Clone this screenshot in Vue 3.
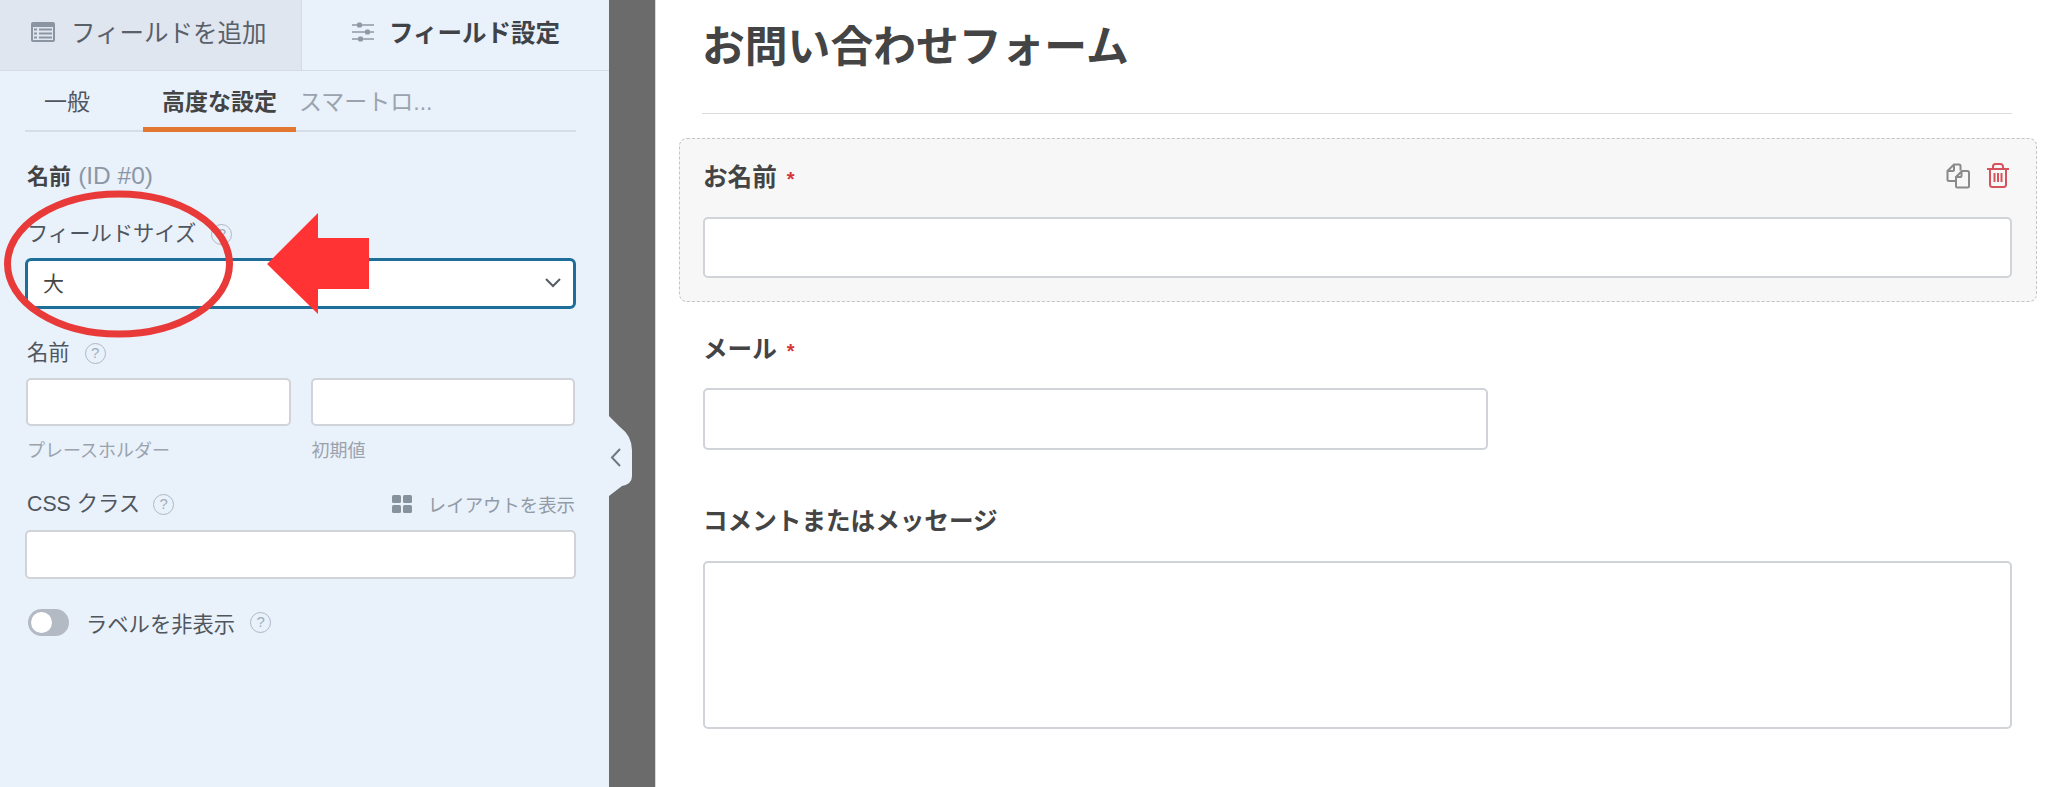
<template>
  <div class="builder">
    <aside class="sidebar">
      <div class="tabs">
        <div class="tab tab-add">
          <svg class="tab-icon" width="24" height="20" viewBox="0 0 24 20">
            <rect x="0" y="0" width="24" height="20" rx="2" fill="#8b95a1" />
            <rect x="2" y="5" width="20" height="13" fill="#dfe6f0" />
            <path d="M3 7.500h3M8 7.500h13M3 11.500h3M8 11.500h13M3 15.500h3M8 15.500h13" stroke="#8b95a1" stroke-width="2" />
          </svg>
          <span>フィールドを追加</span>
        </div>
        <div class="tab tab-settings">
          <svg class="tab-icon" width="22" height="22" viewBox="0 0 22 22">
            <path d="M0 4h22M0 11h22M0 18h22" stroke="#8f98a4" stroke-width="1.600" />
            <rect x="5" y="1.500" width="5" height="5" rx="1.500" fill="#8f98a4" />
            <rect x="13" y="8.500" width="5" height="5" rx="1.500" fill="#8f98a4" />
            <rect x="6" y="15.500" width="5" height="5" rx="1.500" fill="#8f98a4" />
          </svg>
          <span>フィールド設定</span>
        </div>
      </div>

      <div class="panel">
        <div class="subtabs">
          <div class="subtab subtab-general">一般</div>
          <div class="subtab subtab-active">高度な設定</div>
          <div class="subtab subtab-muted">スマートロ...</div>
        </div>

        <div class="section-title">名前 <span class="id-note">(ID #0)</span></div>

        <div class="label label-size">フィールドサイズ<span class="help">?</span></div>
        <div class="select-wrap">
          <select class="select">
            <option>大</option>
          </select>
          <svg class="select-chevron" width="16" height="10" viewBox="0 0 16 10">
            <path d="M1 1l7 7 7-7" fill="none" stroke="#555d66" stroke-width="2" />
          </svg>
        </div>

        <div class="label label-name">名前<span class="help">?</span></div>
        <div class="pair">
          <div class="pair-col">
            <input class="input input-small" type="text" />
            <div class="caption">プレースホルダー</div>
          </div>
          <div class="pair-col">
            <input class="input input-small" type="text" />
            <div class="caption">初期値</div>
          </div>
        </div>

        <div class="css-row">
          <div class="label label-css">CSS クラス<span class="help">?</span></div>
          <div class="layout-link">
            <svg width="20" height="18" viewBox="0 0 20 18">
              <rect x="0" y="0" width="9" height="8" rx="1.500" fill="#87929f" />
              <rect x="11" y="0" width="9" height="8" rx="1.500" fill="#87929f" />
              <rect x="0" y="10" width="9" height="8" rx="1.500" fill="#87929f" />
              <rect x="11" y="10" width="9" height="8" rx="1.500" fill="#87929f" />
            </svg>
            <span>レイアウトを表示</span>
          </div>
        </div>
        <input class="input input-css" type="text" />

        <div class="toggle-row">
          <span class="toggle"><span class="toggle-knob"></span></span>
          <span class="toggle-label">ラベルを非表示</span>
          <span class="help">?</span>
        </div>
      </div>

      <!-- 赤い丸と矢印の注釈 -->
      <svg class="annotation" width="380" height="160" viewBox="0 0 380 160">
        <ellipse cx="118.500" cy="74" rx="111" ry="70" fill="none" stroke="#e93a3a" stroke-width="7" />
        <path d="M267 74L318 23V48H369V99H318V124Z" fill="#ff3333" />
      </svg>
    </aside>

    <div class="divider">
      <svg class="handle" width="24" height="80" viewBox="0 0 24 80">
        <path d="M0 0L11 11Q23 20 23 34V60Q23 68 13 70L0 80Z" fill="#e9f1fb" />
        <path d="M11 33l-8 8.500 8 8.500" fill="none" stroke="#6f7780" stroke-width="2" />
      </svg>
    </div>

    <main class="form">
      <h1 class="form-title">お問い合わせフォーム</h1>
      <hr class="form-rule" />

      <div class="field field-selected">
        <div class="field-actions">
          <svg width="25" height="26" viewBox="0 0 25 26" fill="none" stroke="#8a8a8a" stroke-width="2">
            <path d="M9 18H3a1.500 1.500 0 0 1-1.500-1.500V8L8 1.500h5A1.500 1.500 0 0 1 14.500 3v4.500" />
            <path d="M8 2v5a1 1 0 0 1-1 1H2" />
            <path d="M16 8L10 14V23a1.500 1.500 0 0 0 1.500 1.500h10A1.500 1.500 0 0 0 23 23V9.500A1.500 1.500 0 0 0 21.500 8z" />
            <path d="M15.500 8.500v4.500a1 1 0 0 1-1 1H10.500" />
          </svg>
          <svg width="22" height="25" viewBox="0 0 22 25" fill="none" stroke="#d5535c" stroke-width="2">
            <path d="M0 6h22M6 6V3.500A2.500 2.500 0 0 1 8.500 1h5A2.500 2.500 0 0 1 16 3.500V6" />
            <path d="M3 6V21.500A2.500 2.500 0 0 0 5.500 24h11a2.500 2.500 0 0 0 2.500-2.500V6" />
            <path d="M7.500 10v9M11 10v9M14.500 10v9" />
          </svg>
        </div>
        <div class="field-label">お名前<span class="required">*</span></div>
        <input class="input field-input" type="text" />
      </div>

      <div class="field field-mail">
        <div class="field-label">メール<span class="required">*</span></div>
        <input class="input field-input field-input-medium" type="text" />
      </div>

      <div class="field field-comment">
        <div class="field-label">コメントまたはメッセージ</div>
        <textarea class="input field-textarea"></textarea>
      </div>
    </main>
  </div>
</template>

<script setup>
</script>

<style>
html,
body {
  margin: 0;
  background: #fff;
  overflow: hidden;
}
</style>

<style scoped>
.builder {
  display: flex;
  width: 2048px;
  height: 787px;
  overflow: hidden;
  font-family: "Liberation Sans", "Noto Sans CJK JP", sans-serif;
  color: #444;
}

.sidebar {
  position: relative;
  flex: 0 0 609px;
  background: #e9f1fb;
}

.tabs {
  display: flex;
  height: 70px;
  border-bottom: 1px solid #d3dbe5;
}

.tab {
  display: flex;
  align-items: center;
  padding-bottom: 7px;
  box-sizing: border-box;
  font-size: 24.500px;
}

.tab-add {
  flex: 0 0 302px;
  padding-left: 31px;
  gap: 16px;
  background: #dfe6f0;
  border-right: 1px solid #d3dbe5;
  color: #5a6068;
}

.tab-settings {
  flex: 1;
  padding-left: 50px;
  gap: 15px;
  font-weight: 700;
  color: #3f4347;
}

.panel {
  padding: 0 33px 0 25px;
}

.subtabs {
  display: flex;
  height: 61px;
  box-sizing: border-box;
  border-bottom: 2px solid #d5dde6;
  font-size: 23px;
}

.subtab {
  height: 61px;
  box-sizing: border-box;
  line-height: 62px;
}

.subtab-general {
  width: 118px;
  padding-left: 19px;
  color: #50565d;
}

.subtab-active {
  width: 153px;
  text-align: center;
  font-weight: 700;
  color: #444;
  border-bottom: 5px solid #e27730;
}

.subtab-muted {
  padding-left: 3px;
  color: #9aa3ad;
}

.section-title {
  margin: 29px 0 0 2px;
  font-size: 22px;
  line-height: 30px;
  font-weight: 700;
  color: #444;
}

.id-note {
  margin-left: 1px;
  font-size: 24.500px;
  font-weight: 400;
  color: #8c97a5;
}

.label {
  display: flex;
  align-items: center;
  margin-left: 2px;
  font-size: 21.300px;
  line-height: 30px;
  color: #50565d;
}

.label-size {
  margin-top: 27px;
}

.label-name {
  margin-top: 29px;
}

.label-css {
  margin-top: 0;
}

.label-css .help {
  margin-left: 13px;
}

.help {
  display: inline-block;
  box-sizing: border-box;
  width: 21px;
  height: 21px;
  margin-left: 15px;
  border: 1.500px solid #aeb8c4;
  border-radius: 50%;
  color: #a3adb9;
  font-size: 15px;
  line-height: 18px;
  text-align: center;
}

.select-wrap {
  position: relative;
  margin-top: 9px;
}

.select {
  display: block;
  width: 100%;
  height: 51px;
  box-sizing: border-box;
  padding: 0 0 0 15px;
  border: 3px solid #1d6f99;
  border-radius: 6px;
  background: #fff;
  font-family: inherit;
  font-size: 21px;
  color: #444;
  appearance: none;
  outline: none;
}

.select-chevron {
  position: absolute;
  right: 15px;
  top: 20px;
}

.pair {
  display: flex;
  gap: 20px;
  margin: 10px 1px 0 1px;
}

.pair-col {
  flex: 1;
  min-width: 0;
}

.input {
  display: block;
  box-sizing: border-box;
  width: 100%;
  border: 2px solid #d0d3d7;
  border-radius: 5px;
  background: #fff;
  outline: none;
}

.input-small {
  height: 48px;
}

.caption {
  margin: 13px 0 0 1px;
  font-size: 18px;
  line-height: 24px;
  color: #9aa3ad;
}

.css-row {
  display: flex;
  align-items: center;
  justify-content: space-between;
  margin-top: 26px;
}

.layout-link {
  display: flex;
  align-items: center;
  gap: 16px;
  margin-right: 1px;
  font-size: 18.400px;
  color: #919ba6;
}

.input-css {
  height: 49px;
  margin-top: 11px;
}

.toggle-row {
  display: flex;
  align-items: center;
  margin: 30px 0 0 3px;
  height: 27px;
  font-size: 21.300px;
  color: #50565d;
}

.toggle {
  display: block;
  width: 41px;
  height: 27px;
  box-sizing: border-box;
  padding: 3px;
  border-radius: 14px;
  background: #b3bac3;
}

.toggle-knob {
  display: block;
  width: 21px;
  height: 21px;
  border-radius: 50%;
  background: #fff;
}

.toggle-label {
  margin-left: 17px;
}

.toggle-row .help {
  margin-left: 15px;
}

.annotation {
  position: absolute;
  left: 0;
  top: 190px;
}

.divider {
  position: relative;
  flex: 0 0 47px;
  background: #6b6b6b;
  border-right: 1px solid #d8d8d8;
  box-sizing: border-box;
}

.handle {
  position: absolute;
  left: 0;
  top: 416px;
}

.form {
  flex: 1;
  min-width: 0;
  padding: 0 36px 0 47px;
  background: #fff;
}

.form-title {
  margin: 0 0 0 -1px;
  height: 90px;
  padding-top: 2px;
  box-sizing: border-box;
  font-size: 42.800px;
  line-height: 90px;
  font-weight: 700;
  color: #444;
}

.form-rule {
  margin: 23px 0 0 -1px;
  height: 1px;
  border: 0;
  background: #dcdcdc;
}

.field {
  position: relative;
}

.field-selected {
  margin: 24px -25px 0 -24px;
  padding: 21px 24px 24px 23px;
  height: 164px;
  box-sizing: border-box;
  border: 1px dashed #c4c4c4;
  border-radius: 8px;
  background: #f7f7f7;
}

.field-actions {
  position: absolute;
  right: 27px;
  top: 24px;
  display: flex;
  gap: 16px;
}

.field-label {
  font-size: 24.600px;
  line-height: 36px;
  font-weight: 700;
  color: #444;
}

.required {
  margin-left: 10px;
  color: #d63638;
  font-weight: 700;
  font-size: 20px;
}

.field-input {
  height: 61px;
  margin-top: 20px;
}

.field-mail {
  margin-top: 30px;
}

.field-input-medium {
  width: 785px;
  height: 62px;
  margin-top: 19px;
}

.field-comment {
  margin-top: 54px;
}

.field-textarea {
  height: 168px;
  margin-top: 21px;
  resize: none;
}
</style>
